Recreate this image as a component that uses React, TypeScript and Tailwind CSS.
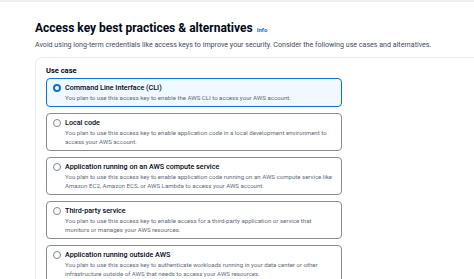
const options = [
  {
    title: "Command Line Interface (CLI)",
    desc: "You plan to use this access key to enable the AWS CLI to access your AWS account.",
    selected: true,
  },
  {
    title: "Local code",
    desc: "You plan to use this access key to enable application code in a local development environment to access your AWS account.",
  },
  {
    title: "Application running on an AWS compute service",
    desc: "You plan to use this access key to enable application code running on an AWS compute service like Amazon EC2, Amazon ECS, or AWS Lambda to access your AWS account.",
  },
  {
    title: "Third-party service",
    desc: "You plan to use this access key to enable access for a third-party application or service that monitors or manages your AWS resources.",
  },
  {
    title: "Application running outside AWS",
    desc: "You plan to use this access key to authenticate workloads running in your data center or other infrastructure outside of AWS that needs to access your AWS resources.",
  },
];

const App = () => {
  return (
    <div className="w-[474px] h-[279px] overflow-hidden bg-white font-['Roboto',sans-serif] text-[#000716]">
      <div className="h-[2px] bg-[#eceeef]" />
      <div className="pl-[35px] pt-[18px]">
        <h1 className="flex items-baseline gap-[4px] text-[12px] font-bold leading-[16px]">
          Access key best practices &amp; alternatives
          <span className="text-[6px] font-bold text-[#0972d3]">Info</span>
        </h1>
        <p className="mt-[2px] text-[7.1px] leading-[10px] text-[#414d5c]">
          Avoid using long-term credentials like access keys to improve your security. Consider the following use cases and alternatives.
        </p>

        {/* Use case container */}
        <div className="mt-[7px] w-[460px] rounded-[7px] border border-[#e9ebed] pl-[10px] pt-[8px] pb-[30px]">
          <div className="mb-[2px] text-[7.5px] font-bold leading-[10px]">Use case</div>
          <div className="flex w-[296px] flex-col gap-[6px]">
            {options.map(opt => (
              <label
                key={opt.title}
                className={
                  opt.selected
                    ? "flex gap-[4px] rounded-[4px] border border-[#0972d3] bg-[#f0f9ff] pl-[6px] pr-[4px] pt-[4px] pb-[4px]"
                    : "flex gap-[4px] rounded-[4px] border border-[#8c8c94] bg-white pl-[6px] pr-[4px] pt-[4px] pb-[4px]"
                }
              >
                <span
                  className={
                    opt.selected
                      ? "mt-[1px] h-[8px] w-[8px] shrink-0 rounded-full border-[2.5px] border-[#0972d3] bg-white"
                      : "mt-[1px] h-[8px] w-[8px] shrink-0 rounded-full border border-[#7d8998] bg-white"
                  }
                />
                <span className="flex flex-col">
                  <span className="text-[7.2px] font-medium leading-[10px]">{opt.title}</span>
                  <span className="text-[6.1px] leading-[9px] text-[#5f6b7a]">{opt.desc}</span>
                </span>
              </label>
            ))}
          </div>
        </div>
      </div>
    </div>
  );
};

export default App;
